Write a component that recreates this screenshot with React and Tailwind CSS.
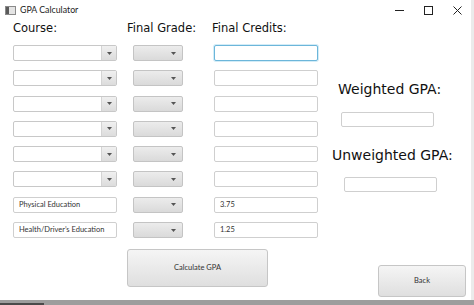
import React from 'react';

const sans = "font-['DejaVu_Sans',sans-serif]";
const ui = "font-['Lato','Noto_Sans',sans-serif]";

const Arrow = () => (
  <svg width="5" height="3" viewBox="0 0 5 3" className="block">
    <path d="M0 0h5L2.5 3z" fill="#555" />
  </svg>
);

const CourseCombo = () => (
  <div className="flex h-[16px] w-[104px] rounded-[2px] border border-[#c8c8c8] bg-white">
    <div className="flex-1" />
    <div className="flex w-[15px] items-center justify-center border-l border-[#d4d4d4] bg-gradient-to-b from-[#f0f0f0] to-[#dcdcdc]">
      <Arrow />
    </div>
  </div>
);

const GradeCombo = () => (
  <div className="flex h-[16px] w-[50px] items-center justify-end rounded-[2px] border border-[#c4c4c4] bg-gradient-to-b from-[#ececec] to-[#dadada] pr-[6px]">
    <Arrow />
  </div>
);

const Field = ({ value, width = 'w-[104px]', focused }) => (
  <div
    className={`flex h-[16px] ${width} items-center rounded-[2px] border bg-white px-[5px] text-[7.5px] text-[#333] ${ui} ${
      focused ? 'border-[#6cb6da] ring-1 ring-[#d3ecf7]' : 'border-[#cfcfcf]'
    }`}
  >
    {value}
  </div>
);

const rows = [
  { course: null, credits: '', focused: true },
  { course: null, credits: '' },
  { course: null, credits: '' },
  { course: null, credits: '' },
  { course: null, credits: '' },
  { course: null, credits: '' },
  { course: 'Physical Education', credits: '3.75' },
  { course: 'Health/Driver\u2019s Education', credits: '1.25' },
];

const Button = ({ children, className }) => (
  <div
    className={`flex items-center justify-center rounded-[3px] border border-[#c6c6c6] bg-gradient-to-b from-[#f5f5f5] to-[#dfdfdf] text-[7.5px] text-[#333] ${ui} ${className}`}
  >
    {children}
  </div>
);

export default function App() {
  return (
    <div className="flex h-[305px] w-[474px] flex-col bg-[#e9e9e9]">
      <div className="flex h-[300px]">
        <div className="flex w-[471px] flex-col bg-white">
          {/* title bar */}
          <div className="flex h-[20px] items-center">
            <svg width="11" height="9" viewBox="0 0 11 9" className="ml-[5px]">
              <rect x="0.5" y="0.5" width="10" height="8" fill="#e4e4e4" stroke="#8a8a8a" />
              <rect x="1" y="1" width="3" height="7" fill="#5a5a5a" />
            </svg>
            <span className={`ml-[4px] text-[8.8px] text-[#222] ${ui}`}>GPA Calculator</span>
            <div className="ml-auto flex items-center">
              <svg width="9" height="9" viewBox="0 0 9 9" className="mr-[20px]">
                <path d="M0 4.5h9" stroke="#222" strokeWidth="1" />
              </svg>
              <svg width="9" height="9" viewBox="0 0 9 9" className="mr-[20px]">
                <rect x="0.5" y="0.5" width="8" height="8" fill="none" stroke="#222" />
              </svg>
              <svg width="9" height="9" viewBox="0 0 9 9" className="mr-[9px]">
                <path d="M0.5 0.5l8 8M8.5 0.5l-8 8" stroke="#222" />
              </svg>
            </div>
          </div>

          <div className="flex flex-1">
            {/* left block */}
            <div className="flex w-[325px] flex-col pl-[13px]">
              <div className={`flex h-[17px] items-center text-[11.5px] text-[#111] ${sans}`}>
                <span className="w-[114px]">Course:</span>
                <span className="w-[85px]">Final Grade:</span>
                <span>Final Credits:</span>
              </div>
              <div className="mt-[8px] flex flex-col gap-[9.3px]">
                {rows.map((r, i) => (
                  <div key={i} className="flex items-center">
                    {r.course ? <Field value={r.course} /> : <CourseCombo />}
                    <div className="ml-[16px]">
                      <GradeCombo />
                    </div>
                    <div className="ml-[31px]">
                      <Field value={r.credits} focused={r.focused} />
                    </div>
                  </div>
                ))}
              </div>
              <Button className="ml-[114px] mt-[11px] h-[38px] w-[141px]">Calculate GPA</Button>
            </div>

            {/* right block */}
            <div className={`flex flex-1 flex-col ${sans}`}>
              <div className="mt-[61px] ml-[13px] h-[17px] text-[14px] leading-[17px] text-[#111]">Weighted GPA:</div>
              <div className="mt-[14px] ml-[16px] h-[15px] w-[93px] rounded-[2px] border border-[#cfcfcf] bg-white" />
              <div className="mt-[20px] ml-[7px] h-[17px] text-[14px] leading-[17px] text-[#111]">Unweighted GPA:</div>
              <div className="mt-[13px] ml-[19px] h-[15px] w-[93px] rounded-[2px] border border-[#cfcfcf] bg-white" />
              <Button className="mt-[73px] ml-[53px] h-[32px] w-[88px]">Back</Button>
            </div>
          </div>
        </div>
        <div className="flex-1 bg-[#ebebeb]" />
      </div>
      <div className="flex h-[5px] bg-[#9d9d9d]">
        <div className="h-[2px] w-[44px] self-end bg-[#4a4a4a]" />
      </div>
    </div>
  );
}
